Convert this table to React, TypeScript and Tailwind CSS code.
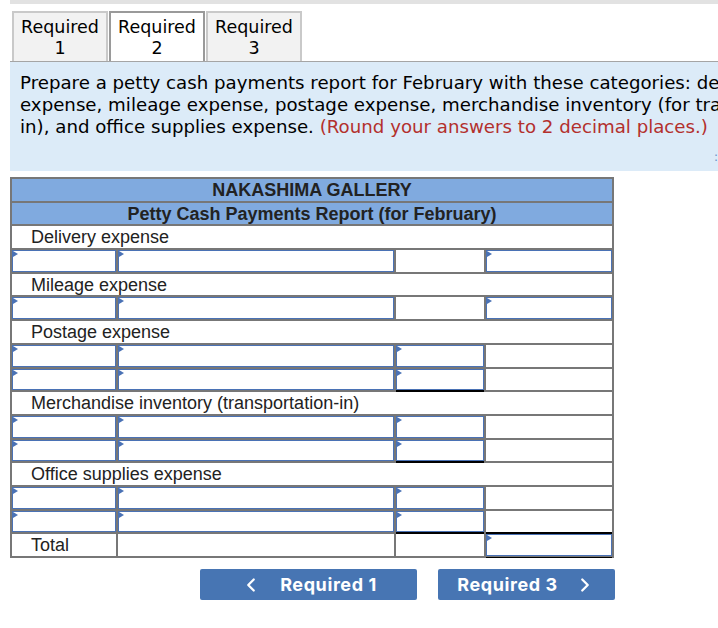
import { ChevronLeft, ChevronRight } from "lucide-react";

type Cell = "input" | "blank" | "sum";

const Marker = () => (
  <svg
    width="5"
    height="6"
    viewBox="0 0 5 6"
    className="absolute left-0 top-0"
  >
    <path d="M0 0 L5 3 L0 6 Z" fill="#4a72b5" />
  </svg>
);

const InputBox = () => (
  <div className="relative h-full w-full border border-[#4a72b5] bg-white">
    <Marker />
  </div>
);

// border-l is counted inside each width (border-box)
const widths = ["w-[104px]", "w-[278px]", "w-[90px]", "w-[128px]"];

const EntryRow = ({ cells }: { cells: Cell[] }) => (
  <div className="flex h-[23.7px] border-b-2 border-[#777]">
    {cells.map((c, i) => (
      <div
        key={i}
        className={`relative ${widths[i]} ${i > 0 ? "border-l-2 border-[#777]" : ""}`}
      >
        {c !== "blank" && <InputBox />}
        {c === "sum" && (
          <div className="absolute -bottom-[2px] left-0 right-0 h-[2px] bg-black" />
        )}
      </div>
    ))}
  </div>
);

const LabelRow = ({ label }: { label: string }) => (
  <div className="flex h-[23.7px] items-center border-b-2 border-[#777] pl-[19px] text-[18px] leading-none">
    {label}
  </div>
);

const debitRow: Cell[] = ["input", "input", "blank", "input"];
const lineRow: Cell[] = ["input", "input", "input", "blank"];
const lastRow: Cell[] = ["input", "input", "sum", "blank"];

export default function App() {
  return (
    <div
      className="relative h-[628px] w-[718px] overflow-hidden bg-white text-[#222]"
      style={{ fontFamily: "Liberation Sans, Arial, sans-serif" }}
    >
      <div className="ml-[10px] h-[4px] bg-[#e2e2e2]" />

      {/* tabs */}
      <div
        className="mt-[7px] flex pl-[12px] text-[17.5px] leading-[21px] text-black"
        style={{ fontFamily: "DejaVu Sans, Verdana, sans-serif" }}
      >
        <div className="flex h-[50px] w-[96px] flex-col items-center border-2 border-b-0 border-[#c9c9c9] bg-[#f2f2f2] pt-[4px]">
          <span>Required</span>
          <span>1</span>
        </div>
        <div className="ml-[1px] flex h-[50px] w-[96px] flex-col items-center border-2 border-b-0 border-[#9a9a9a] bg-white pt-[4px]">
          <span>Required</span>
          <span>2</span>
        </div>
        <div className="ml-[1px] flex h-[50px] w-[96px] flex-col items-center border-2 border-b-0 border-[#c9c9c9] bg-[#f2f2f2] pt-[4px]">
          <span>Required</span>
          <span>3</span>
        </div>
      </div>

      {/* instructions */}
      <div
        className="relative ml-[10px] h-[110px] w-[760px] border-t border-[#a5a5a5] bg-[#dcebf8] pl-[10px] pt-[10px] text-[18.2px] leading-[22px] whitespace-nowrap text-black"
        style={{ fontFamily: "DejaVu Sans, Verdana, sans-serif" }}
      >
        <p>
          Prepare a petty cash payments report for February with these categories: delivery
          <br />
          expense, mileage expense, postage expense, merchandise inventory (for transportation-
          <br />
          in), and office supplies expense.{" "}
          <span className="text-[#b3302d]">(Round your answers to 2 decimal places.)</span>
        </p>
        <span className="absolute left-[704px] top-[84px] text-[12px] text-[#6b8fc4]">:</span>
      </div>

      {/* report table */}
      <div className="ml-[10px] mt-[6px] w-[604px] border-2 border-b-0 border-[#777]">
        <div className="flex h-[23.7px] items-center justify-center border-b-2 border-[#777] bg-[#80aadf] text-[18px] font-bold leading-none">
          NAKASHIMA GALLERY
        </div>
        <div className="flex h-[23.7px] items-center justify-center border-b-2 border-[#777] bg-[#80aadf] text-[18px] font-bold leading-none">
          Petty Cash Payments Report (for February)
        </div>
        <LabelRow label="Delivery expense" />
        <EntryRow cells={debitRow} />
        <LabelRow label="Mileage expense" />
        <EntryRow cells={debitRow} />
        <LabelRow label="Postage expense" />
        <EntryRow cells={lineRow} />
        <EntryRow cells={lastRow} />
        <LabelRow label="Merchandise inventory (transportation-in)" />
        <EntryRow cells={lineRow} />
        <EntryRow cells={lastRow} />
        <LabelRow label="Office supplies expense" />
        <EntryRow cells={lineRow} />
        <EntryRow cells={lastRow} />
        <div className="flex h-[23.7px] border-b-2 border-[#777]">
          <div className="flex w-[104px] items-center pl-[19px] text-[18px] leading-none">
            Total
          </div>
          <div className="w-[278px] border-l-2 border-[#777]" />
          <div className="w-[90px] border-l-2 border-[#777]" />
          <div className="relative w-[128px] border-l-2 border-[#777]">
            <InputBox />
            <div className="absolute -top-[2px] left-0 right-0 h-[2px] bg-black" />
            <div className="absolute -bottom-[2px] left-0 right-0 h-[1px] bg-black" />
          </div>
        </div>
      </div>

      {/* navigation */}
      <div
        className="mt-[11px] flex pl-[200px] text-[18px] font-bold tracking-[0.6px] text-white"
        style={{ fontFamily: "Inter, sans-serif" }}
      >
        <button className="flex h-[31px] w-[217px] items-center justify-center gap-[18px] rounded-[2px] bg-[#4775b3]">
          <ChevronLeft size={22} strokeWidth={2.5} />
          <span>Required 1</span>
        </button>
        <button className="ml-[21px] flex h-[31px] w-[177px] items-center justify-center gap-[16px] rounded-[2px] bg-[#4775b3]">
          <span>Required 3</span>
          <ChevronRight size={22} strokeWidth={2.5} />
        </button>
      </div>
    </div>
  );
}
